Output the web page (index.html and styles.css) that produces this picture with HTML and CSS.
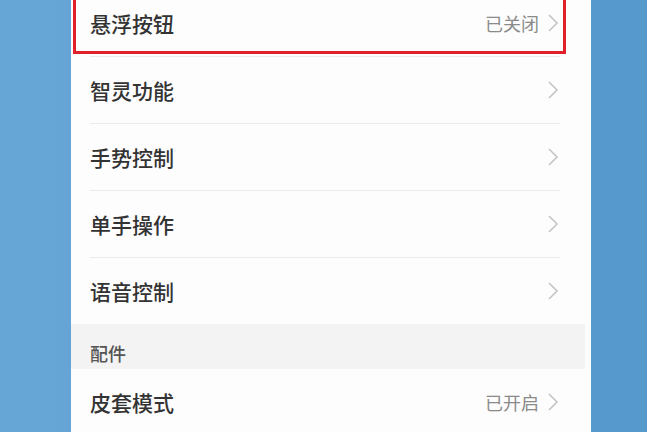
FILE: index.html
```html
<!DOCTYPE html>
<html lang="zh-CN">
<head>
<meta charset="utf-8">
<title>设置</title>
<link rel="stylesheet" href="styles.css">
</head>
<body>
<div class="screen">
  <div class="panel">
    <div class="content">
      <div class="group">
        <div class="highlight"></div>
        <div class="row">
          <span class="label">悬浮按钮</span>
          <span class="value">已关闭</span>
          <svg class="chev" width="12" height="18" viewBox="0 0 12 18"><polyline points="2,1 10,9 2,17" fill="none" stroke="#c4c4c4" stroke-width="1.6"/></svg>
        </div>
        <div class="row">
          <span class="label">智灵功能</span>
          <svg class="chev" width="12" height="18" viewBox="0 0 12 18"><polyline points="2,1 10,9 2,17" fill="none" stroke="#c4c4c4" stroke-width="1.6"/></svg>
        </div>
        <div class="row">
          <span class="label">手势控制</span>
          <svg class="chev" width="12" height="18" viewBox="0 0 12 18"><polyline points="2,1 10,9 2,17" fill="none" stroke="#c4c4c4" stroke-width="1.6"/></svg>
        </div>
        <div class="row">
          <span class="label">单手操作</span>
          <svg class="chev" width="12" height="18" viewBox="0 0 12 18"><polyline points="2,1 10,9 2,17" fill="none" stroke="#c4c4c4" stroke-width="1.6"/></svg>
        </div>
        <div class="row last">
          <span class="label">语音控制</span>
          <svg class="chev" width="12" height="18" viewBox="0 0 12 18"><polyline points="2,1 10,9 2,17" fill="none" stroke="#c4c4c4" stroke-width="1.6"/></svg>
        </div>
      </div>
      <div class="section-title">配件</div>
      <div class="group">
        <div class="row">
          <span class="label">皮套模式</span>
          <span class="value">已开启</span>
          <svg class="chev" width="12" height="18" viewBox="0 0 12 18"><polyline points="2,1 10,9 2,17" fill="none" stroke="#c4c4c4" stroke-width="1.6"/></svg>
        </div>
      </div>
    </div>
  </div>
</div>
</body>
</html>
```

FILE: styles.css
```css
html, body {
  margin: 0;
  padding: 0;
}
body {
  width: 647px;
  height: 432px;
  overflow: hidden;
  background: linear-gradient(90deg, #66a6d7 0%, #62a1d2 40%, #5599cd 100%);
  font-family: "Noto Sans CJK SC", "Noto Sans", sans-serif;
}
.screen {
  padding-left: 71px;
  height: 432px;
}
.panel {
  width: 520px;
  height: 432px;
  background: #fdfdfd;
  overflow: hidden;
}
.content {
  width: 514px;
  margin-top: -10px;
}
.group {
  position: relative;
}
.highlight {
  position: absolute;
  left: 2px;
  top: 0;
  width: 487px;
  height: 58px;
  border: 3px solid #e0212b;
  z-index: 2;
}
.row {
  display: flex;
  align-items: center;
  height: 66px;
  margin: 0 25px 0 19px;
  border-bottom: 1px solid #ececec;
}
.row.last {
  border-bottom: none;
}
.label {
  flex: 1;
  font-size: 21px;
  font-weight: 500;
  color: #333333;
  line-height: 1;
}
.value {
  font-size: 18px;
  color: #8a8a8a;
  line-height: 1;
  margin-right: 8px;
}
.chev {
  display: block;
  margin-right: 1px;
}
.section-title {
  height: 45px;
  box-sizing: border-box;
  background: #f3f3f3;
  padding: 0 0 7px 19px;
  display: flex;
  align-items: flex-end;
  font-size: 18px;
  font-weight: 500;
  line-height: 1;
  color: #555555;
}
```
